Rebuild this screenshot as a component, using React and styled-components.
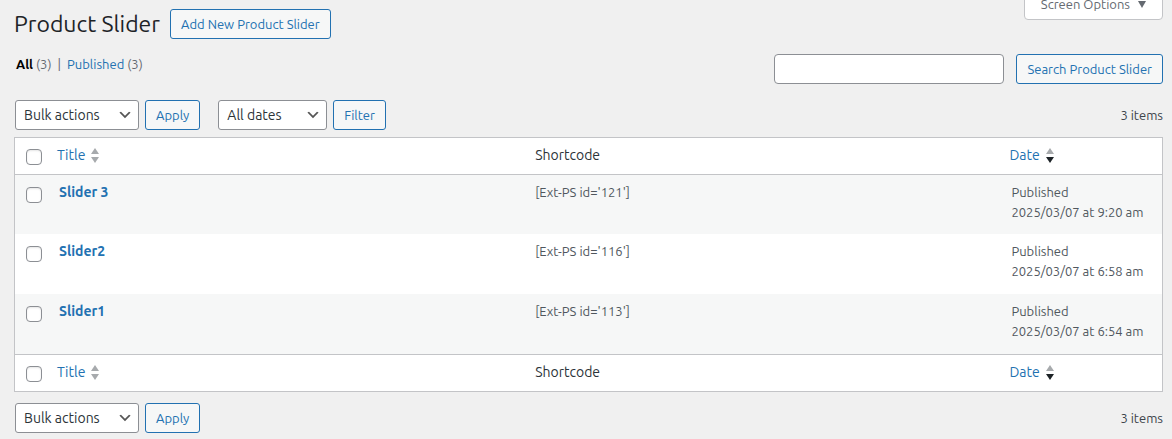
import React from 'react';
import styled, { createGlobalStyle } from 'styled-components';

const GlobalStyle = createGlobalStyle`
  * {
    box-sizing: border-box;
  }
  body {
    margin: 0;
    background: #f0f0f0;
    color: #3c434a;
    font-family: Ubuntu, "Noto Sans", sans-serif;
    font-size: 13px;
    line-height: 20px;
  }
  a {
    color: #2271b1;
    text-decoration: none;
  }
`;

const Wrap = styled.div`
  padding: 0 9px 0 14px;
`;

const Header = styled.header`
  display: flex;
  align-items: flex-start;
  justify-content: space-between;
  height: 54px;
  .heading {
    display: flex;
    align-items: center;
    gap: 10px;
    padding-top: 9px;
  }
  h1 {
    margin: 0;
    font-size: 23px;
    font-weight: 400;
    line-height: 30px;
    color: #1d2327;
  }
`;

const ScreenOptions = styled.button`
  display: flex;
  align-items: center;
  gap: 8px;
  height: 30px;
  margin-top: -10px;
  padding: 0 16px 2px;
  border: 1px solid #c3c4c7;
  border-radius: 0 0 4px 4px;
  background: #fff;
  color: #646970;
  font: inherit;
`;

const Button = styled.button`
  height: 30px;
  padding: 0 10px;
  border: 1px solid #2271b1;
  border-radius: 3px;
  background: #f6f7f7;
  color: #2271b1;
  font: inherit;
  white-space: nowrap;
`;

const Toolbar = styled.div`
  display: flex;
  align-items: center;
  justify-content: space-between;
`;

const Views = styled.ul`
  display: flex;
  align-self: flex-start;
  gap: 6px;
  margin: 0;
  padding: 0 2px;
  list-style: none;
  color: #646970;
  .current {
    color: #000;
    font-weight: 600;
  }
`;

const SearchBox = styled.form`
  display: flex;
  gap: 12px;
  input {
    width: 230px;
    height: 30px;
    padding: 0 8px;
    border: 1px solid #8c8f94;
    border-radius: 4px;
    background: #fff;
    font: inherit;
  }
`;

const TableNav = styled(Toolbar)`
  padding: ${({ $bottom }) => ($bottom ? '11px 0 6px 1px' : '16px 0 7px 1px')};
`;

const Actions = styled.div`
  display: flex;
  gap: 18px;
`;

const ActionGroup = styled.div`
  display: flex;
  gap: 6px;
`;

const SelectBox = styled.div`
  position: relative;
  width: ${({ $width }) => $width}px;
  select {
    width: 100%;
    height: 30px;
    padding: 0 24px 0 8px;
    appearance: none;
    border: 1px solid #8c8f94;
    border-radius: 3px;
    background: #fff;
    color: #2c3338;
    font: inherit;
    font-size: 14px;
  }
  svg {
    position: absolute;
    top: 7px;
    right: 6px;
    pointer-events: none;
  }
`;

const Table = styled.table`
  width: 100%;
  table-layout: fixed;
  border: 1px solid #c3c4c7;
  border-spacing: 0;
  background: #fff;
  th,
  td {
    padding: 7px 10px;
    text-align: left;
    vertical-align: top;
    font-weight: 400;
  }
  td {
    color: #50575e;
  }
  thead th,
  tfoot th {
    height: 37px;
    color: #2c3338;
    font-size: 14px;
  }
  thead th {
    border-bottom: 1px solid #c3c4c7;
  }
  tfoot th {
    border-top: 1px solid #c3c4c7;
  }
  tbody tr {
    height: 60px;
  }
  tbody tr:first-child {
    height: 59px;
  }
  tbody tr:nth-child(odd) {
    background: #f6f7f7;
  }
  .check {
    width: 34px;
    padding: 12px 0 0 11px;
    line-height: 0;
  }
  thead .check,
  tfoot .check {
    padding-top: 11px;
  }
  thead .sortable,
  tfoot .sortable {
    padding: 7px 8px;
  }
  .date {
    width: 14%;
    white-space: nowrap;
  }
`;

const Checkbox = styled.input`
  width: 16px;
  height: 16px;
  margin: 0;
  appearance: none;
  border: 1px solid #8c8f94;
  border-radius: 4px;
  background: #fff;
  box-shadow: inset 0 1px 2px rgba(0, 0, 0, 0.1);
`;

const SortLink = styled.a`
  display: flex;
  align-items: center;
  gap: 6px;
`;

const RowTitle = styled.a`
  font-size: 14px;
  font-weight: 600;
`;

const sliders = [
  { id: 121, title: 'Slider 3', date: '2025/03/07 at 9:20 am' },
  { id: 116, title: 'Slider2', date: '2025/03/07 at 6:58 am' },
  { id: 113, title: 'Slider1', date: '2025/03/07 at 6:54 am' },
];

const Select = ({ label, width }) => (
  <SelectBox $width={width}>
    <select aria-label={label}>
      <option>{label}</option>
    </select>
    <svg width="16" height="16" viewBox="0 0 20 20">
      <path d="M5 6l5 5 5-5 2 1-7 7-7-7 2-1z" fill="#555" />
    </svg>
  </SelectBox>
);

const SortIcon = ({ active }) => (
  <svg width="8" height="15" viewBox="0 0 8 15">
    <path d="M4 0L8 6H0z" fill="#a7aaad" />
    <path d="M0 9H8L4 15z" fill={active ? '#1d2327' : '#a7aaad'} />
  </svg>
);

const ColumnHeadings = () => (
  <tr>
    <th className="check">
      <Checkbox type="checkbox" aria-label="Select All" />
    </th>
    <th className="sortable">
      <SortLink href="#title">
        Title
        <SortIcon />
      </SortLink>
    </th>
    <th>Shortcode</th>
    <th className="sortable date">
      <SortLink href="#date">
        Date
        <SortIcon active />
      </SortLink>
    </th>
  </tr>
);

const App = () => {
  return (
    <>
      <GlobalStyle />
      <Wrap>
        <Header>
          <div className="heading">
            <h1>Product Slider</h1>
            <Button type="button">Add New Product Slider</Button>
          </div>
          <ScreenOptions type="button">
            Screen Options
            <svg width="8" height="7" viewBox="0 0 8 7">
              <path d="M0 0H8L4 7z" fill="#646970" />
            </svg>
          </ScreenOptions>
        </Header>
        <Toolbar>
          <Views>
            <li>
              <a href="#all" className="current">All</a> (3)
            </li>
            <li>|</li>
            <li>
              <a href="#published">Published</a> (3)
            </li>
          </Views>
          <SearchBox>
            <input type="search" aria-label="Search Product Slider" />
            <Button type="button">Search Product Slider</Button>
          </SearchBox>
        </Toolbar>
        <TableNav>
          <Actions>
            <ActionGroup>
              <Select label="Bulk actions" width={124} />
              <Button type="button">Apply</Button>
            </ActionGroup>
            <ActionGroup>
              <Select label="All dates" width={109} />
              <Button type="button">Filter</Button>
            </ActionGroup>
          </Actions>
          <span>3 items</span>
        </TableNav>
        <Table>
          <thead>
            <ColumnHeadings />
          </thead>
          <tbody>
            {sliders.map(({ id, title, date }) => (
              <tr key={id}>
                <th className="check">
                  <Checkbox type="checkbox" aria-label={`Select ${title}`} />
                </th>
                <td>
                  <RowTitle href={`#${id}`}>{title}</RowTitle>
                </td>
                <td>[Ext-PS id='{id}']</td>
                <td className="date">
                  Published
                  <br />
                  {date}
                </td>
              </tr>
            ))}
          </tbody>
          <tfoot>
            <ColumnHeadings />
          </tfoot>
        </Table>
        <TableNav $bottom>
          <ActionGroup>
            <Select label="Bulk actions" width={124} />
            <Button type="button">Apply</Button>
          </ActionGroup>
          <span>3 items</span>
        </TableNav>
      </Wrap>
    </>
  );
};

export default App;
